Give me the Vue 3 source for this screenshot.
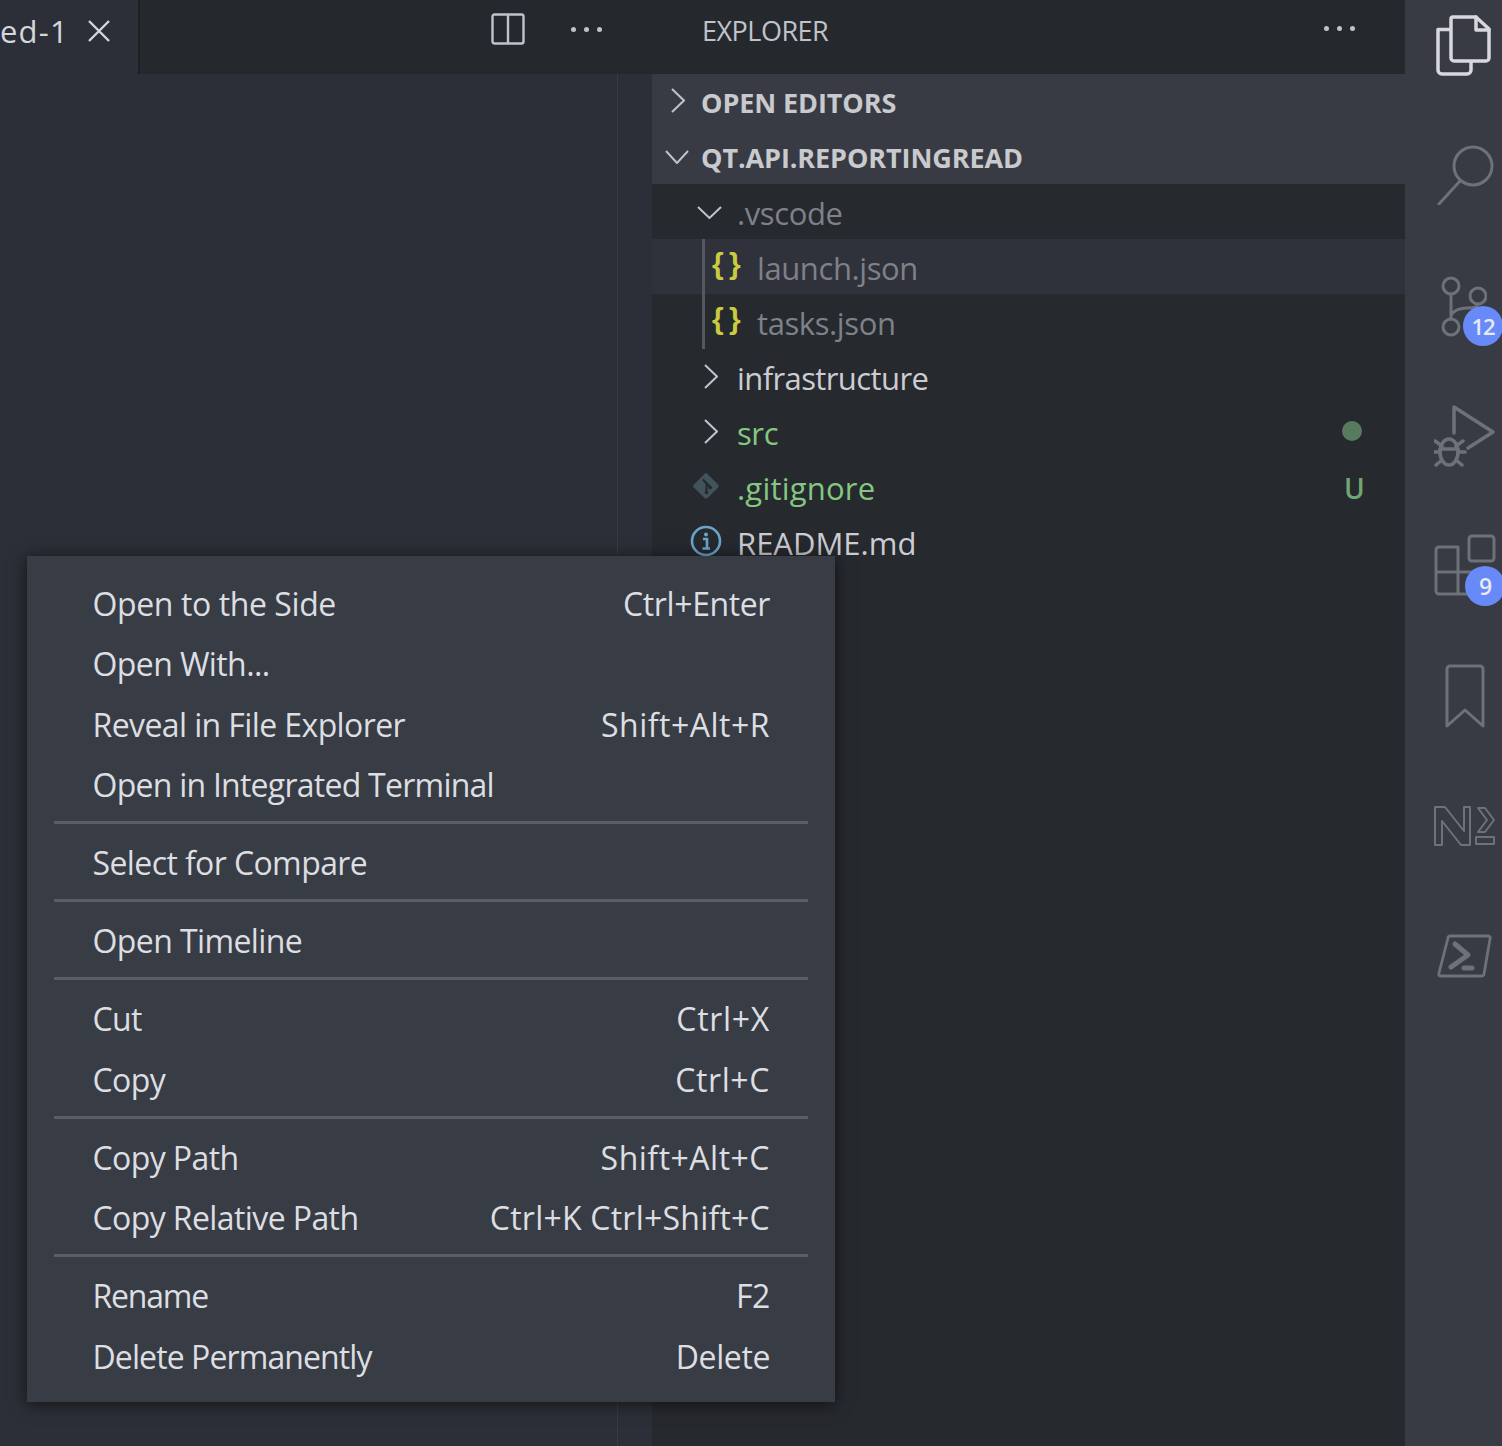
<script setup>
const tree = [
  { name: '.vscode', cls: 'dim', indent: 43, chevron: 'down', icon: null },
  { name: 'launch.json', cls: 'dim hover', indent: 63, icon: 'json', guide: true },
  { name: 'tasks.json', cls: 'dim', indent: 63, icon: 'json', guide: true },
  { name: 'infrastructure', cls: '', indent: 43, chevron: 'right', icon: null, ls: -0.6 },
  { name: 'src', cls: 'added', indent: 43, chevron: 'right', icon: null, dot: true },
  { name: '.gitignore', cls: 'added', indent: 43, icon: 'git', letter: 'U', ls: 0.2 },
  { name: 'README.md', cls: '', indent: 43, icon: 'info', ls: 0 }
]

const menu = [
  [
    { label: 'Open to the Side', labelLs: -0.4, key: 'Ctrl+Enter', ls: -0.4 },
    { label: 'Open With...' },
    { label: 'Reveal in File Explorer', key: 'Shift+Alt+R', ls: 0.5 },
    { label: 'Open in Integrated Terminal', labelLs: -0.75 }
  ],
  [{ label: 'Select for Compare' }],
  [{ label: 'Open Timeline' }],
  [
    { label: 'Cut', key: 'Ctrl+X', ls: 0.7 },
    { label: 'Copy', key: 'Ctrl+C', ls: 0.6 }
  ],
  [
    { label: 'Copy Path', key: 'Shift+Alt+C', ls: 0.5 },
    { label: 'Copy Relative Path', key: 'Ctrl+K Ctrl+Shift+C', ls: 0.23 }
  ],
  [
    { label: 'Rename', labelLs: -1.2, key: 'F2', ls: -0.4 },
    { label: 'Delete Permanently', labelLs: -0.9, key: 'Delete', ls: -0.4 }
  ]
]
</script>

<template>
  <div class="window">
    <div class="main">
      <div class="topbar">
        <div class="tab">
          <span class="tab-name">ed-1</span>
          <svg class="tab-close" viewBox="0 0 24 24"><path d="M2 2 22 22M22 2 2 22" /></svg>
        </div>
        <div class="editor-actions">
          <svg class="split" viewBox="0 0 34 32"><rect x="1.5" y="1.5" width="31" height="29" rx="2" /><path d="M17 1.500V30.500" /></svg>
          <div class="dots"><i></i><i></i><i></i></div>
        </div>
        <div class="explorer-head">
          <span>EXPLORER</span>
          <div class="dots"><i></i><i></i><i></i></div>
        </div>
      </div>

      <div class="body">
        <div class="editor"></div>
        <div class="gutter"></div>
        <div class="sidebar">
          <div class="section">
            <svg class="chev" viewBox="0 0 14 25"><path d="M1 1 13 12.500 1 24" /></svg>
            <span>OPEN EDITORS</span>
          </div>
          <div class="section">
            <svg class="chev open" viewBox="0 0 24 14"><path d="M1 1 12 13 23 1" /></svg>
            <span>QT.API.REPORTINGREAD</span>
          </div>
          <div
            v-for="row in tree"
            :key="row.name"
            class="row"
            :class="row.cls"
          >
            <span v-if="row.guide" class="guide"></span>
            <svg v-if="row.chevron === 'down'" class="tree-chev down" viewBox="0 0 25 13"><path d="M1 1 12.500 12 24 1" /></svg>
            <svg v-if="row.chevron === 'right'" class="tree-chev right" viewBox="0 0 14 25"><path d="M1 1 13 12.500 1 24" /></svg>
            <span v-if="row.icon === 'json'" class="json-icon">{ }</span>
            <svg v-if="row.icon === 'git'" class="file-icon git" viewBox="0 0 28 28">
              <rect x="5" y="5" width="18" height="18" rx="2" transform="rotate(45 14 14)" />
              <path d="M11 8 19 16M14.500 12V20" />
              <circle cx="14.500" cy="20" r="1.700" />
              <circle cx="18" cy="15.500" r="1.700" />
            </svg>
            <svg v-if="row.icon === 'info'" class="file-icon info" viewBox="0 0 32 32">
              <circle cx="16" cy="16" r="14" />
              <circle class="info-dot" cx="16" cy="9.500" r="2" />
              <path d="M13 14H17V23M12.500 23.500H20" />
            </svg>
            <span
              class="name"
              :style="{ marginLeft: row.indent + 'px', letterSpacing: (row.ls ?? -0.4) + 'px' }"
            >{{ row.name }}</span>
            <span v-if="row.dot" class="git-dot"></span>
            <span v-if="row.letter" class="git-letter">{{ row.letter }}</span>
          </div>
        </div>
      </div>
    </div>

    <div class="activity">
      <svg class="act files" viewBox="0 0 56 62">
        <path d="M34 15.500H2V56a4 4 0 0 0 4 4H31a4 4 0 0 0 4-4V47" transform="translate(0 -1)" />
        <path d="M17 2H40L53 14V43a3 3 0 0 1-3 3H18a3 3 0 0 1-3-3V4a2 2 0 0 1 2-2Z" class="files-top" />
        <path d="M40 2V15H53" />
      </svg>
      <svg class="act search" viewBox="0 0 58 60">
        <circle cx="36" cy="21" r="19" />
        <path d="M23 36 2 59" />
      </svg>
      <div class="act-wrap git-wrap">
        <svg class="act" viewBox="0 0 48 70">
          <circle cx="12" cy="11" r="8" />
          <circle cx="12" cy="52" r="8" />
          <circle cx="39" cy="21" r="8" />
          <path d="M12 19V44M12 40C16 34 22 33 28 33 34 33 39 32 39 29" />
        </svg>
        <span class="badge">12</span>
      </div>
      <svg class="act debug" viewBox="0 0 62 62">
        <path d="M20 28V2L59 27 34 43" />
        <ellipse cx="15" cy="47" rx="9" ry="13" />
        <path d="M6 44H24M0 47H6M24 47H31M1 36 8 41M29 36 22 41M2 60 8 55M28 60 22 55" />
      </svg>
      <div class="act-wrap ext-wrap">
        <svg class="act" viewBox="0 0 62 62">
          <rect x="35" y="2" width="25" height="25" rx="3" />
          <path d="M2 16a3 3 0 0 1 3-3H24V60H5a3 3 0 0 1-3-3ZM2 38H46V60H24" />
        </svg>
        <span class="badge nine">9</span>
      </div>
      <svg class="act bookmark" viewBox="0 0 42 64">
        <path d="M3 5a3 3 0 0 1 3-3H36a3 3 0 0 1 3 3V62L21 46 3 62Z" />
      </svg>
      <svg class="act nx" viewBox="0 0 62 40">
        <path d="M1 1H11L30 25V1H36V39H27L8 15V39H1ZM44 2H51L60 14 51 26H44L53 14ZM42 31H60V38H42Z" />
      </svg>
      <svg class="act ps" viewBox="0 0 56 44">
        <path d="M13 2H51a2 2 0 0 1 2 3L47 40a2.500 2.500 0 0 1-3 2H4a2 2 0 0 1-2-3L11 4a2 2 0 0 1 2-2Z" />
        <path class="ps-in" d="M18 10 31 21 14 33M27 34H35" />
      </svg>
    </div>

    <div class="menu">
      <template v-for="(group, g) in menu" :key="g">
        <div v-if="g > 0" class="sep"></div>
        <div class="group">
          <div v-for="item in group" :key="item.label" class="item">
            <span :style="{ letterSpacing: (item.labelLs ?? -0.6) + 'px' }">{{ item.label }}</span>
            <span v-if="item.key" :style="{ letterSpacing: item.ls + 'px' }">{{ item.key }}</span>
          </div>
        </div>
      </template>
    </div>
  </div>
</template>

<style>
html, body {
  margin: 0;
  background: #282b31;
}
</style>

<style scoped>
.window {
  position: relative;
  display: flex;
  width: 1502px;
  height: 1446px;
  overflow: hidden;
  font-family: "Open Sans", "Noto Sans", sans-serif;
  letter-spacing: -0.4px;
  color: #cccdd2;
}
.main {
  flex: 1;
  display: flex;
  flex-direction: column;
  min-width: 0;
}
.topbar {
  display: flex;
  height: 74px;
  background: #25282d;
  flex-shrink: 0;
}
.tab {
  width: 138px;
  display: flex;
  align-items: center;
  background: #2c2f37;
  border-right: 2px solid #1e2025;
  font-size: 31px;
  color: #d4d6dc;
  padding-bottom: 12px;
  box-sizing: content-box;
}
.tab-name {
  letter-spacing: 1.2px;
}
.tab-close {
  width: 24px;
  height: 24px;
  margin-left: 18px;
  fill: none;
  stroke: #d4d6dc;
  stroke-width: 2.4;
}
.editor-actions {
  width: 512px;
  display: flex;
  align-items: center;
  padding-bottom: 16px;
}
.split {
  width: 34px;
  height: 32px;
  margin-left: 351px;
  fill: none;
  stroke: #c0c3ca;
  stroke-width: 2.4;
}
.dots {
  display: flex;
  gap: 8px;
}
.dots i {
  width: 5px;
  height: 5px;
  border-radius: 50%;
  background: #c0c3ca;
}
.editor-actions .dots {
  margin-left: 46px;
}
.explorer-head {
  flex: 1;
  display: flex;
  align-items: center;
  justify-content: space-between;
  padding: 0 50px 14px 50px;
  font-size: 27px;
  letter-spacing: -0.5px;
  color: #c0c3ca;
}
.explorer-head .dots {
  margin-bottom: 4px;
}
.body {
  flex: 1;
  display: flex;
  min-height: 0;
}
.editor {
  width: 617px;
  background: #2c2f37;
  border-right: 1px solid #383b44;
}
.gutter {
  width: 34px;
  background: #2c2f37;
}
.sidebar {
  flex: 1;
  background: #26292e;
}
.section {
  height: 55px;
  box-sizing: border-box;
  padding: 2px 0 0 49px;
  display: flex;
  align-items: center;
  position: relative;
  background: #383b44;
  font-size: 27px;
  font-weight: 700;
  letter-spacing: -0.1px;
  color: #c8cacd;
}
.chev {
  position: absolute;
  left: 19px;
  top: 14px;
  width: 14px;
  height: 25px;
  fill: none;
  stroke: #c0c3ca;
  stroke-width: 2;
}
.chev.open {
  left: 13px;
  top: 21px;
  width: 24px;
  height: 14px;
}
.row {
  position: relative;
  height: 55px;
  display: flex;
  align-items: center;
  font-size: 31px;
  color: #cccdd2;
}
.row .name {
  padding: 2px 0 0 42px;
}
.row.dim {
  color: #7e8188;
}
.row.hover {
  background: #2f323b;
}
.row.added {
  color: #85c781;
}
.guide {
  position: absolute;
  left: 50px;
  top: 0;
  bottom: 0;
  width: 3px;
  background: #55585f;
}
.tree-chev {
  position: absolute;
  fill: none;
  stroke: #c0c3ca;
  stroke-width: 2;
}
.tree-chev.down {
  left: 45px;
  top: 22px;
  width: 25px;
  height: 13px;
}
.tree-chev.right {
  left: 52px;
  top: 15px;
  width: 14px;
  height: 25px;
}
.json-icon {
  position: absolute;
  left: 60px;
  top: 8px;
  font-family: "Liberation Sans", sans-serif;
  font-size: 30px;
  font-weight: 700;
  letter-spacing: -1.5px;
  white-space: pre;
  color: #cbcb41;
}
.file-icon {
  position: absolute;
}
.git {
  left: 39px;
  top: 12px;
  width: 30px;
  height: 30px;
  fill: #41535b;
}
.git path {
  fill: none;
  stroke: #26292e;
  stroke-width: 2;
}
.git circle {
  fill: #26292e;
}
.info {
  left: 38px;
  top: 11px;
  width: 32px;
  height: 32px;
  fill: none;
  stroke: #6ba4c8;
  stroke-width: 2.600;
}
.info .info-dot {
  fill: #6ba4c8;
  stroke: none;
}
.git-dot {
  position: absolute;
  left: 690px;
  top: 17px;
  width: 20px;
  height: 20px;
  border-radius: 50%;
  background: #587a5f;
}
.git-letter {
  position: absolute;
  left: 692px;
  top: 10px;
  font-size: 28px;
  font-weight: 600;
  color: #6fa672;
}
.activity {
  width: 97px;
  flex-shrink: 0;
  display: flex;
  flex-direction: column;
  background: #383b44;
}
.act {
  display: block;
  fill: none;
  stroke: #6e7178;
  stroke-width: 3;
  stroke-linecap: round;
  stroke-linejoin: round;
}
.files {
  width: 56px;
  height: 62px;
  margin: 15px 0 0 31px;
  stroke: #d6d8de;
  stroke-width: 3.500;
}
.files-top {
  fill: #383b44;
}
.search {
  width: 58px;
  height: 60px;
  margin: 68px 0 0 32px;
}
.act-wrap {
  position: relative;
}
.git-wrap {
  margin: 70px 0 0 34px;
  height: 70px;
}
.git-wrap .act {
  width: 48px;
  height: 70px;
}
.badge {
  position: absolute;
  left: 24px;
  top: 31px;
  width: 40px;
  height: 40px;
  border-radius: 50%;
  background: #6889f8;
  color: #e6e9f2;
  font-size: 22px;
  font-weight: 600;
  letter-spacing: -1px;
  line-height: 40px;
  text-align: center;
}
.debug {
  width: 62px;
  height: 62px;
  margin: 60px 0 0 29px;
  stroke-width: 3.500;
}
.ext-wrap {
  margin: 67px 0 0 29px;
  height: 62px;
}
.ext-wrap .act {
  width: 62px;
  height: 62px;
}
.badge.nine {
  left: 31px;
  top: 32px;
  font-size: 23px;
}
.bookmark {
  width: 42px;
  height: 64px;
  margin: 68px 0 0 39px;
}
.nx {
  width: 62px;
  height: 40px;
  margin: 78px 0 0 29px;
  stroke-width: 2;
  stroke-linecap: butt;
}
.ps {
  width: 56px;
  height: 44px;
  margin: 88px 0 0 32px;
  stroke-width: 2.800;
}
.ps-in {
  stroke-width: 5;
}
.menu {
  position: absolute;
  left: 27px;
  top: 556px;
  width: 808px;
  height: 846px;
  box-sizing: border-box;
  padding: 17px 27px 0;
  background: #383c44;
  box-shadow: 0 2px 16px rgba(0, 0, 0, 0.6);
  font-size: 32px;
  color: #dcdee2;
}
.item {
  height: 60.500px;
  display: flex;
  align-items: center;
  justify-content: space-between;
  padding: 0 38px 0 38.500px;
}
.sep {
  height: 3px;
  margin: 6px 0 8.500px;
  background: #5a5d64;
}
</style>
